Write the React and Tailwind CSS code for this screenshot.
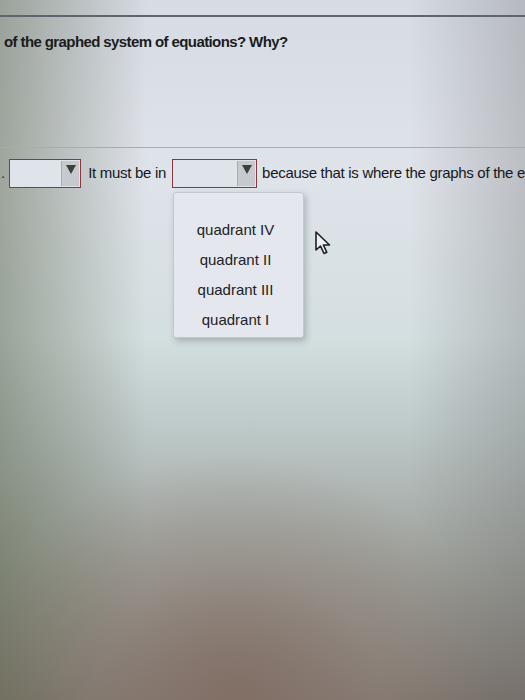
import React from 'react';

function Select({ width }) {
  return (
    <div
      className={`flex h-[29px] items-stretch border border-[#8e3640] bg-[#dfe3ea] ${width}`}
    >
      <div className="flex-1" />
      <div className="my-[1px] mr-[1px] flex w-[18px] items-start justify-center border-l border-[#a9adb3] bg-[#c6cacf] pt-[4px]">
        <svg width="10" height="9" viewBox="0 0 10 9">
          <path d="M0 0 H10 L5 9 Z" fill="#3d3f3d" />
        </svg>
      </div>
    </div>
  );
}

function Cursor() {
  return (
    <svg width="18" height="26" viewBox="0 0 18 26" className="absolute left-[314px] top-[230px]">
      <path
        d="M2 2 L2 20 L6.5 16 L10 23.5 L12.8 22.3 L9.4 15 L15.5 15 Z"
        fill="#eef0f4"
        stroke="#1d1f22"
        strokeWidth="1.6"
        strokeLinejoin="round"
      />
    </svg>
  );
}

export default function App() {
  const items = ['quadrant IV', 'quadrant II', 'quadrant III', 'quadrant I'];

  return (
    <div
      className="relative h-[700px] w-full overflow-hidden bg-[radial-gradient(ellipse_50%_35%_at_45%_100%,rgba(130,110,100,0.9)_0%,rgba(145,130,122,0.45)_55%,rgba(160,150,145,0)_100%),linear-gradient(to_right,rgba(95,105,80,0.5)_0%,rgba(0,0,0,0)_28%,rgba(0,0,0,0)_78%,rgba(105,105,105,0.3)_100%),linear-gradient(to_bottom,#d6dbe4_0%,#dfe3ea_25%,#d4dfe1_48%,#bcc7c7_62%,#9fa29c_80%,#7d746d_100%)]"
      style={{ fontFamily: '"Liberation Sans", Arial, sans-serif' }}
    >
      <div className="h-[15px]" />
      <div className="h-[2px] bg-[#5f656c]" />

      <div className="pl-[4px] pt-[15px] text-[15px] font-bold leading-[20px] tracking-[-0.6px] text-[#1a1c20]">
        of the graphed system of equations? Why?
      </div>

      <div className="mt-[95px] h-[1px] bg-[#a4adb5]" />

      <div className="flex items-center whitespace-nowrap pt-[11px] text-[15px] tracking-[-0.3px] text-[#15171a]">
        <span className="ml-[1px] mr-[4px] text-[#333]">.</span>
        <Select width="w-[74px]" />
        <span className="ml-[7px] mr-[6px]">It must be in</span>
        <Select width="w-[87px]" />
        <span className="ml-[5px]">because that is where the graphs of the e</span>
      </div>

      <div className="ml-[173px] mt-[4px] flex h-[146px] w-[131px] flex-col items-center rounded-[3px] border border-[#c3c8ce] bg-[#e4e7ed] pt-[27px] text-[15px] leading-[20px] text-[#202226] shadow-[2px_3px_6px_rgba(60,70,80,0.3)]">
        {items.map((label) => (
          <div key={label} className="mb-[10px] pr-[6px]">
            {label}
          </div>
        ))}
      </div>

      <Cursor />
    </div>
  );
}
